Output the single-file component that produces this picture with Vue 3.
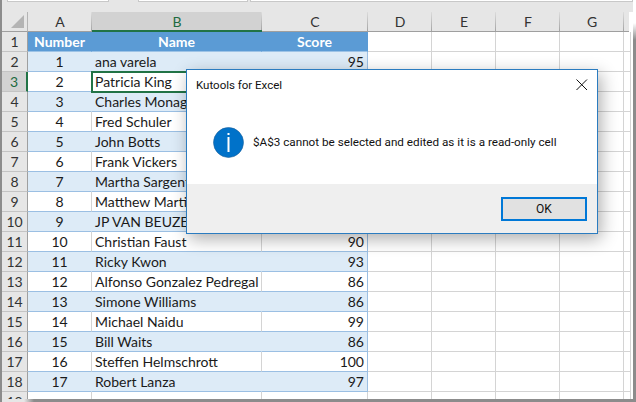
<template>
  <div class="window">
    <div class="formula-bar">
      <span class="fx-box name"></span>
      <span class="fx-box mid"></span>
      <span class="fx-box end"></span>
    </div>

    <div class="sheet">
      <div class="corner"><span class="corner-tri"></span></div>
      <div
        v-for="col in columns"
        :key="col"
        class="col-head"
        :class="{ active: col === 'B' }"
      >
        {{ col }}
      </div>
      <div class="col-head tail"></div>

      <template v-for="(row, i) in rows" :key="i">
        <div class="row-head" :class="{ active: i === 2 }">{{ i + 1 }}</div>
        <div
          v-for="(cell, c) in row.cells"
          :key="c"
          class="cell"
          :class="[row.kind, c === 0 ? 'center' : '', c === 2 ? 'right' : '', i === 2 && c === 1 ? 'selected' : '']"
        >
          {{ cell }}
        </div>
        <div v-for="n in 5" :key="n" class="cell blank"></div>
      </template>

      <div class="row-head">19</div>
      <div v-for="n in 8" :key="n" class="cell blank"></div>
    </div>

    <span class="edge left"></span>
    <span class="edge right"></span>
    <span class="edge bottom"></span>

    <div class="dialog">
      <div class="dialog-title">
        <span>Kutools for Excel</span>
        <svg class="close" width="14" height="14" viewBox="0 0 14 14">
          <path d="M1.5 1.5 L12 12 M12 1.5 L1.5 12" stroke="#111" stroke-width="1" fill="none" />
        </svg>
      </div>
      <div class="dialog-body">
        <svg class="info" width="31" height="31" viewBox="0 0 31 31">
          <circle cx="15.5" cy="15.5" r="15" fill="#0072c9" stroke="#1b5f9b" stroke-width="0.6" />
          <rect x="14.5" y="6" width="2" height="2" fill="#fff" />
          <rect x="14.5" y="10" width="2" height="15" fill="#fff" />
        </svg>
        <span>$A$3 cannot be selected and edited as it is a read-only cell</span>
      </div>
      <div class="dialog-foot">
        <button class="ok">OK</button>
      </div>
    </div>
  </div>
</template>

<script setup>
const columns = ["A", "B", "C", "D", "E", "F", "G"];

const people = [
  ["ana varela", 95],
  ["Patricia King", ""],
  ["Charles Monaghan", ""],
  ["Fred Schuler", ""],
  ["John Botts", ""],
  ["Frank Vickers", ""],
  ["Martha Sargent", ""],
  ["Matthew Martin", ""],
  ["JP VAN BEUZEKOM", ""],
  ["Christian Faust", 90],
  ["Ricky Kwon", 93],
  ["Alfonso Gonzalez Pedregal", 86],
  ["Simone Williams", 86],
  ["Michael Naidu", 99],
  ["Bill Waits", 86],
  ["Steffen Helmschrott", 100],
  ["Robert Lanza", 97],
];

const rows = [
  { kind: "title", cells: ["Number", "Name", "Score"] },
  ...people.map((p, i) => ({
    kind: i % 2 === 0 ? "band" : "plain",
    cells: [i + 1, p[0], p[1]],
  })),
];
</script>

<style>
html,
body {
  margin: 0;
  background: #fff;
}
</style>

<style scoped>
.window {
  position: relative;
  width: 636px;
  height: 402px;
  box-sizing: border-box;
  padding-left: 2px;
  overflow: hidden;
  background: #fff;
  font-family: Lato, "Liberation Sans", sans-serif;
  font-size: 14px;
  color: #1a1a1a;
}

/* window frame, fades out at the top right and bottom left */
.edge {
  position: absolute;
  z-index: 1;
}

.edge.left {
  left: 0;
  top: 0;
  bottom: 0;
  width: 2px;
  background: #8c8c8c;
}

.edge.right {
  right: 0;
  top: 0;
  bottom: 0;
  width: 3px;
  background: linear-gradient(to bottom, #fff 23px, #8c8c8c 40px);
}

.edge.bottom {
  left: 2px;
  right: 0;
  bottom: 0;
  height: 3px;
  background: linear-gradient(to right, #e6e6e6 22px, #8c8c8c 32px);
}

.formula-bar {
  display: flex;
  width: 631px;
  height: 12px;
  box-sizing: border-box;
  background: #e6e6e6;
}

.fx-box {
  height: 1px;
  background: #fff;
  border: 1px solid #c8c8c8;
  border-top: 0;
  box-sizing: content-box;
}

.fx-box.name {
  width: 100px;
  margin-left: 5px;
}

.fx-box.mid {
  width: 108px;
  margin-left: 29px;
}

.fx-box.end {
  flex: 1;
  margin-left: 2px;
}

.sheet {
  display: grid;
  grid-template-columns: 26px 64px 170px 106px 64px 64px 64px 64px 5px;
  grid-auto-rows: 20px;
}

.corner,
.col-head,
.row-head {
  background: #e6e6e6;
  box-sizing: border-box;
  border-bottom: 1px solid #9f9f9f;
  display: flex;
  align-items: center;
  justify-content: center;
  color: #333;
}

.corner {
  position: relative;
  border-right: 1px solid #b4b4b4;
}

.corner-tri {
  position: absolute;
  right: 3px;
  bottom: 3px;
  width: 0;
  height: 0;
  border-left: 13px solid transparent;
  border-bottom: 13px solid #b4b4b4;
}

.col-head {
  background-image: linear-gradient(to bottom, #dcdcdc, #a4a4a4);
  background-repeat: no-repeat;
  background-position: right top;
  background-size: 1px 100%;
}

.col-head.active {
  background-color: #d2d2d2;
  border-bottom: 2px solid #217346;
  color: #1e6b41;
}

.col-head.tail {
  background-image: none;
}

.row-head {
  border-right: 1px solid #9f9f9f;
  border-bottom: 1px solid #c4c4c4;
}

.row-head.active {
  background: #d2d2d2;
  border-right: 2px solid #217346;
  color: #1e6b41;
}

.cell {
  box-sizing: border-box;
  border-right: 1px solid #d4d4d4;
  border-bottom: 1px solid #d4d4d4;
  padding: 0 3px;
  line-height: 20px;
  white-space: nowrap;
  overflow: hidden;
}

.center {
  text-align: center;
}

.right {
  text-align: right;
}

.title {
  background: #5b9bd5;
  color: #fff;
  font-weight: 700;
  text-align: center;
  border-right-color: #5b9bd5;
  border-bottom-color: #9dc3e6;
}

.band {
  background: #ddebf7;
  border-right-color: #ddebf7;
  border-bottom-color: #9bbfe3;
}

.plain {
  border-bottom-color: #9bbfe3;
}

.plain.right,
.band.right {
  border-right-color: #9bbfe3;
}

.title.right {
  text-align: center;
  border-right-color: #5b9bd5;
}

.selected {
  outline: 2px solid #217346;
  outline-offset: -1px;
  position: relative;
  z-index: 1;
}

.dialog {
  position: absolute;
  left: 186px;
  top: 69px;
  width: 412px;
  height: 165px;
  box-sizing: border-box;
  display: flex;
  flex-direction: column;
  background: #fff;
  border: 1px solid #2b7cc0;
  box-shadow: 3px 5px 16px rgba(0, 0, 0, 0.32);
  z-index: 2;
  font-family: Roboto, "Noto Sans", sans-serif;
  font-size: 11.7px;
  color: #111;
}

.dialog-title {
  display: flex;
  align-items: center;
  justify-content: space-between;
  height: 30px;
  padding: 0 8px 0 9px;
  font-size: 11.5px;
}

.dialog-body {
  flex: 1;
  display: flex;
  align-items: center;
  gap: 9px;
  padding: 0 0 0 26px;
}

.dialog-foot {
  display: flex;
  justify-content: flex-end;
  align-items: flex-start;
  height: 49px;
  padding: 13px 10px 0 0;
  box-sizing: border-box;
  background: #efefef;
}

.ok {
  width: 86px;
  height: 24px;
  padding: 0;
  background: #e1e1e1;
  border: 2px solid #0078d7;
  font: inherit;
  font-size: 12px;
  color: #111;
}
</style>
